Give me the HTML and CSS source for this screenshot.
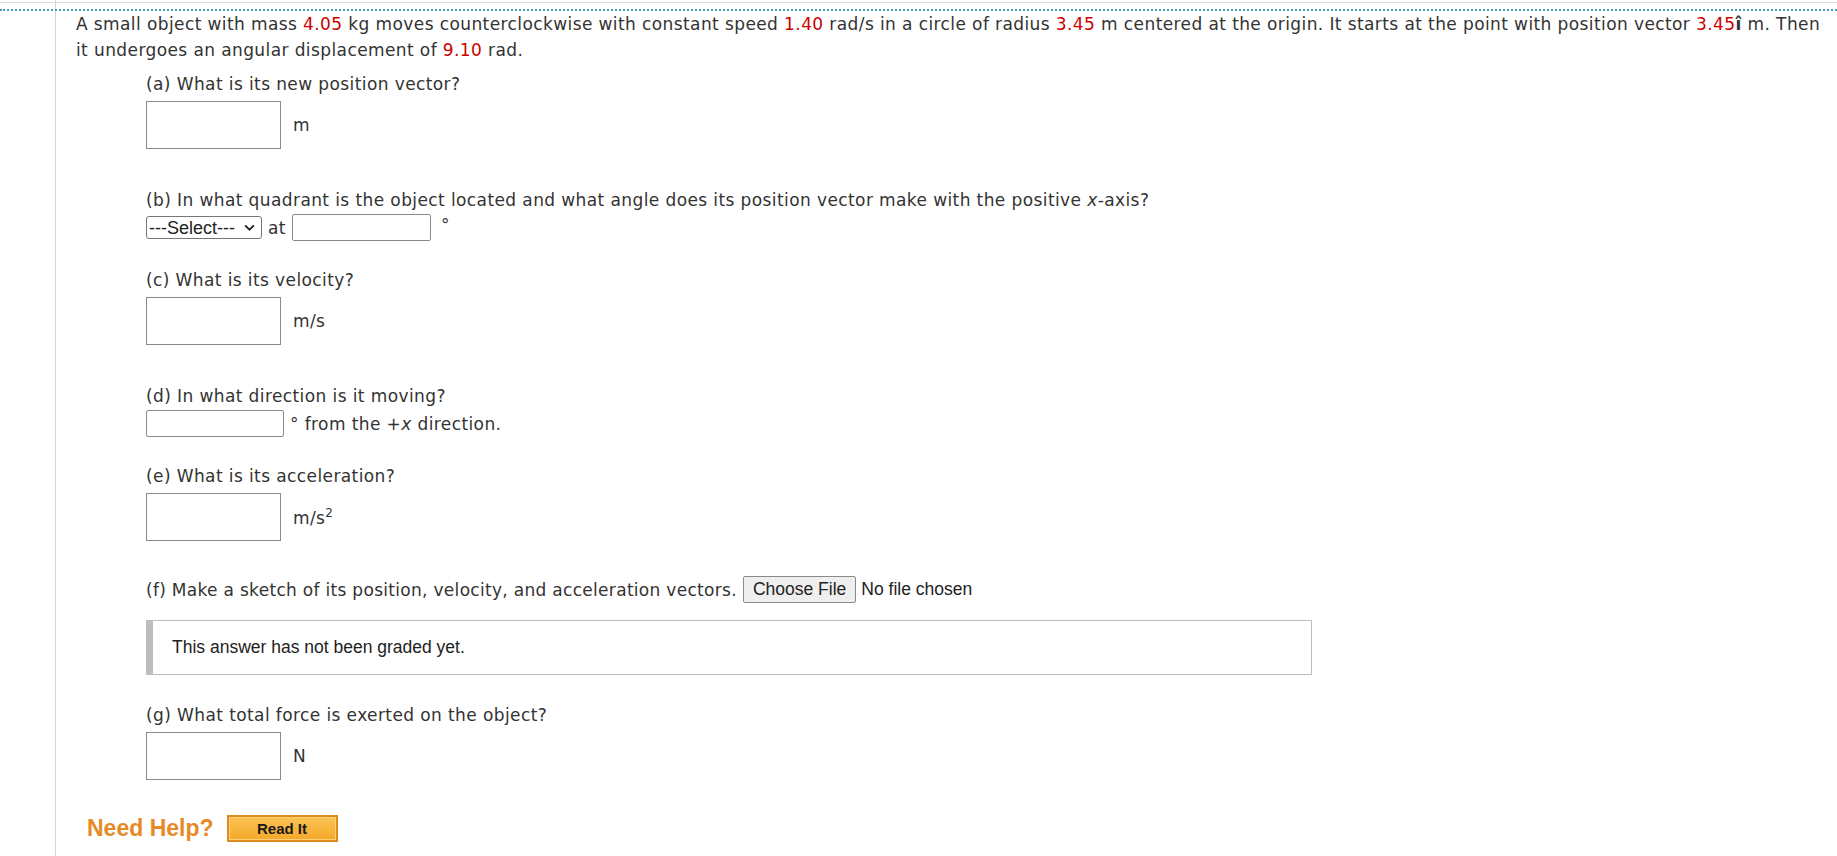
FILE: index.html
```html
<!DOCTYPE html>
<html lang="en">
<head>
    <meta charset="UTF-8">
    <meta name="viewport" content="width=device-width, initial-scale=1.0">
    <title>Circular Motion Question</title>
    <link rel="stylesheet" href="styles.css">
</head>
<body>
    <div class="rule-light"></div>
    <div class="rule-dots"></div>

    <div class="question">
        <p class="stem">A small object with mass <span class="val">4.05</span> kg moves counterclockwise with constant speed <span class="val">1.40</span> rad/s in a circle of radius <span class="val">3.45</span> m centered at the origin. It starts at the point with position vector <span class="val">3.45</span><b class="hat">î</b> m. Then it undergoes an angular displacement of <span class="val">9.10</span> rad.</p>

        <div class="parts">
            <div class="part part-tall">
                <div class="label">(a) What is its new position vector?</div>
                <div class="answer-row">
                    <input type="text" class="box">
                    <span class="unit">m</span>
                </div>
            </div>

            <div class="part part-short">
                <div class="label">(b) In what quadrant is the object located and what angle does its position vector make with the positive <i>x</i>-axis?</div>
                <div class="answer-row">
                    <select class="pick">
                        <option>---Select---</option>
                        <option>first quadrant</option>
                        <option>second quadrant</option>
                        <option>third quadrant</option>
                        <option>fourth quadrant</option>
                    </select>
                    <span class="at">at</span>
                    <input type="text" class="field">
                    <span class="deg">°</span>
                </div>
            </div>

            <div class="part part-tall">
                <div class="label">(c) What is its velocity?</div>
                <div class="answer-row">
                    <input type="text" class="box">
                    <span class="unit">m/s</span>
                </div>
            </div>

            <div class="part part-short">
                <div class="label">(d) In what direction is it moving?</div>
                <div class="answer-row">
                    <input type="text" class="field field-d">
                    <span class="dir">° from the +<i>x</i> direction.</span>
                </div>
            </div>

            <div class="part part-tall">
                <div class="label">(e) What is its acceleration?</div>
                <div class="answer-row">
                    <input type="text" class="box">
                    <span class="unit">m/s<sup>2</sup></span>
                </div>
            </div>

            <div class="part part-file">
                <div class="file-row">
                    <span class="label">(f) Make a sketch of its position, velocity, and acceleration vectors.</span>
                    <input type="file" class="upload">
                </div>
                <div class="graded">This answer has not been graded yet.</div>
            </div>

            <div class="part">
                <div class="label">(g) What total force is exerted on the object?</div>
                <div class="answer-row">
                    <input type="text" class="box">
                    <span class="unit">N</span>
                </div>
            </div>
        </div>

        <div class="help">
            <span class="help-title">Need Help?</span>
            <button type="button" class="read-it">Read It</button>
        </div>
    </div>
</body>
</html>
```

FILE: styles.css
```css
body {
    margin: 0;
    font-family: "DejaVu Sans", Verdana, sans-serif;
    font-size: 17px;
    letter-spacing: 0.4px;
    color: #333;
    background: #fff linear-gradient(#d4d4d4, #d4d4d4) 55px 0 / 1px 100% no-repeat;
    min-height: 856px;
}
.rule-light {
    margin-top: 2px;
    border-top: 1px solid #dcdcdc;
}
.rule-dots {
    margin-top: 6px;
    border-top: 2px dotted #4a9fb6;
}
.question {
    padding: 0 8px 0 76px;
}
.stem {
    margin: 0;
    line-height: 26px;
}
.val {
    color: #cc0000;
}
.hat {
    color: #333;
}
.parts {
    margin-top: 9px;
    padding-left: 70px;
}
.label {
    line-height: 24px;
}
.part-tall {
    margin-bottom: 39px;
}
.part-short {
    margin-bottom: 27px;
}
.answer-row {
    display: flex;
    align-items: center;
}
.part-tall .answer-row,
.part:last-child .answer-row {
    margin-top: 5px;
}
.part-short .answer-row {
    margin-top: 2px;
}
.box {
    width: 135px;
    height: 48px;
    box-sizing: border-box;
    border: 1px solid #8a8a8a;
    margin: 0;
    padding: 0 4px;
}
.field {
    width: 139px;
    height: 27px;
    box-sizing: border-box;
    border: 1px solid #8a8a8a;
    border-radius: 2px;
    margin: 0;
}
.field-d {
    width: 138px;
}
.unit {
    margin-left: 12px;
}
.unit sup {
    font-size: 12px;
}
.pick {
    appearance: none;
    -webkit-appearance: none;
    width: 116px;
    height: 23px;
    box-sizing: border-box;
    border: 1px solid #767676;
    border-radius: 3px;
    padding: 0 0 0 2px;
    font-family: "Liberation Sans", Arial, sans-serif;
    font-size: 18px;
    letter-spacing: 0;
    color: #222;
    background: #fff url("data:image/svg+xml,%3Csvg viewBox='0 0 10 6' xmlns='http://www.w3.org/2000/svg'%3E%3Cpath d='M1 1L5 5L9 1' fill='none' stroke='%23222' stroke-width='1.6'/%3E%3C/svg%3E") no-repeat right 6px top 50% / 11px 7px;
}
.at {
    margin: 0 6px;
}
.deg {
    margin-left: 10px;
    margin-top: -6px;
}
.dir {
    margin-left: 6px;
}
.part-file {
    margin-top: -4px;
}
.file-row {
    display: flex;
    align-items: center;
    height: 27px;
    letter-spacing: 0.3px;
}
.upload {
    margin-left: 6px;
    font-family: "Liberation Sans", Arial, sans-serif;
    font-size: 17.5px;
    letter-spacing: 0;
    color: #222;
}
.upload::file-selector-button {
    font: inherit;
    height: 27px;
    padding: 0 9px;
    margin-right: 5px;
    border: 1px solid #8a8a8a;
    border-radius: 2px;
    background-color: #efefef;
    color: #222;
}
.graded {
    margin-top: 17px;
    width: 1166px;
    height: 55px;
    box-sizing: border-box;
    border: 1px solid #bdbdbd;
    border-left: 7px solid #bdbdbd;
    padding-left: 19px;
    display: flex;
    align-items: center;
    font-family: "Liberation Sans", Arial, sans-serif;
    font-size: 17.5px;
    letter-spacing: 0;
    color: #222;
    margin-bottom: 28px;
}
.help {
    display: flex;
    align-items: center;
    margin: 35px 0 0 11px;
    height: 27px;
}
.help-title {
    font-family: "Liberation Sans", Arial, sans-serif;
    font-weight: bold;
    font-size: 23px;
    letter-spacing: 0;
    color: #e58a25;
}
.read-it {
    margin-left: 13px;
    width: 111px;
    height: 27px;
    border: 2px solid #de8a1d;
    box-shadow: inset 0 0 0 1px #ffd27a;
    background: linear-gradient(#fbc354, #f4a928);
    font-family: "Liberation Sans", Arial, sans-serif;
    font-weight: bold;
    font-size: 15px;
    letter-spacing: 0;
    color: #1a1a1a;
    cursor: pointer;
}
```
